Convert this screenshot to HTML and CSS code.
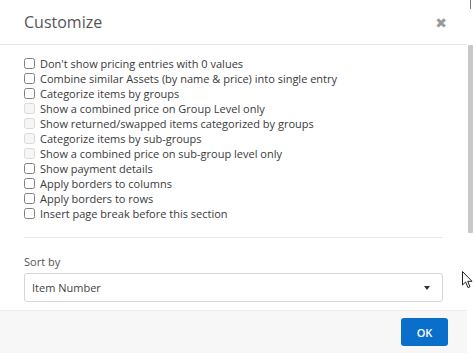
FILE: index.html
```html
<!DOCTYPE html>
<html lang="en">
<head>
    <meta charset="UTF-8">
    <meta name="viewport" content="width=device-width, initial-scale=1.0">
    <title>Customize</title>
    <link rel="stylesheet" href="styles.css">
</head>
<body>
    <div class="modal">
        <div class="modal-header">
            <h2>Customize</h2>
            <span class="close">&#x2716;</span>
        </div>

        <div class="modal-body">
            <ul class="options">
                <li><span class="box"></span>Don't show pricing entries with 0 values</li>
                <li><span class="box"></span>Combine similar Assets (by name &amp; price) into single entry</li>
                <li><span class="box"></span>Categorize items by groups</li>
                <li><span class="box disabled"></span>Show a combined price on Group Level only</li>
                <li><span class="box disabled"></span>Show returned/swapped items categorized by groups</li>
                <li><span class="box disabled"></span>Categorize items by sub-groups</li>
                <li><span class="box disabled"></span>Show a combined price on sub-group level only</li>
                <li><span class="box"></span>Show payment details</li>
                <li><span class="box"></span>Apply borders to columns</li>
                <li><span class="box"></span>Apply borders to rows</li>
                <li><span class="box"></span>Insert page break before this section</li>
            </ul>

            <hr class="divider">

            <label class="field-label">Sort by</label>
            <div class="select">
                <span>Item Number</span>
                <span class="caret"></span>
            </div>
        </div>

        <div class="modal-footer">
            <button class="ok-btn">OK</button>
        </div>
    </div>

    <div class="scrollbar"></div>
    <div class="edge"></div>

    <!-- mouse pointer sitting over the page -->
    <svg class="cursor" width="11" height="18" viewBox="0 0 11 18">
        <path d="M0.5 0.5 L0.5 14 L3.6 11 L6 16.6 L8 15.7 L5.7 10.3 L10 10.3 Z" fill="#fff" stroke="#222" stroke-width="1" stroke-linejoin="round"/>
    </svg>
</body>
</html>
```

FILE: styles.css
```css
* {
    margin: 0;
    padding: 0;
    box-sizing: border-box;
}

body {
    background-color: #fff;
    font-family: "Open Sans", Arial, sans-serif;
    color: #333;
    width: 474px;
    height: 355px;
    overflow: hidden;
    position: relative;
}

.modal {
    width: 467px;
    height: 355px;
    display: flex;
    flex-direction: column;
    background: #fff;
}

.modal-header {
    height: 45px;
    padding: 0 20px 0 24px;
    display: flex;
    justify-content: space-between;
    align-items: center;
    border-bottom: 1px solid #e6e6e6;
}

.modal-header h2 {
    font-size: 16px;
    font-weight: 400;
    color: #555;
}

.close {
    font-family: "DejaVu Sans", sans-serif;
    font-size: 14px;
    color: #9a9a9a;
    margin-top: 1px;
}

.modal-body {
    padding: 11px 24px 0 24px;
}

.options {
    list-style: none;
}

.options li {
    display: flex;
    align-items: center;
    height: 15px;
    font-size: 11px;
    color: #3a3a3a;
}

.box {
    width: 11px;
    height: 11px;
    border: 1px solid #808080;
    border-radius: 2.5px;
    background: #fff;
    margin-right: 5px;
    flex-shrink: 0;
}

.box.disabled {
    border-color: #dadada;
    background: #f6f6f6;
}

.divider {
    border: none;
    border-top: 1px solid #e8e8e8;
    margin: 16px 0 16px 0;
}

.field-label {
    display: block;
    font-size: 11px;
    line-height: 15px;
    color: #555;
    margin-bottom: 4px;
}

.select {
    height: 29px;
    border: 1px solid #d6d6d6;
    border-radius: 3px;
    padding: 0 12px 0 7px;
    display: flex;
    justify-content: space-between;
    align-items: center;
    font-size: 11px;
    color: #444;
}

.caret {
    width: 0;
    height: 0;
    border-left: 3px solid transparent;
    border-right: 3px solid transparent;
    border-top: 4px solid #333;
}

.modal-footer {
    margin-top: 8px;
    height: 43px;
    background: #f7f7f7;
    border-top: 1px solid #ececec;
    display: flex;
    justify-content: flex-end;
    align-items: center;
    padding-right: 19px;
}

.ok-btn {
    width: 47px;
    height: 28px;
    border: none;
    border-radius: 3px;
    background-color: #0a6fcb;
    color: #fff;
    font-family: "Open Sans", Arial, sans-serif;
    font-size: 11px;
    font-weight: 600;
    cursor: pointer;
}

.scrollbar {
    position: absolute;
    left: 468px;
    top: 45px;
    width: 5px;
    height: 188px;
    background: #c8c8c8;
    border-radius: 1px;
}

.edge {
    position: absolute;
    left: 470px;
    top: 0;
    width: 1px;
    height: 9px;
    background: #777;
}

.cursor {
    position: absolute;
    left: 462px;
    top: 271px;
}
```
